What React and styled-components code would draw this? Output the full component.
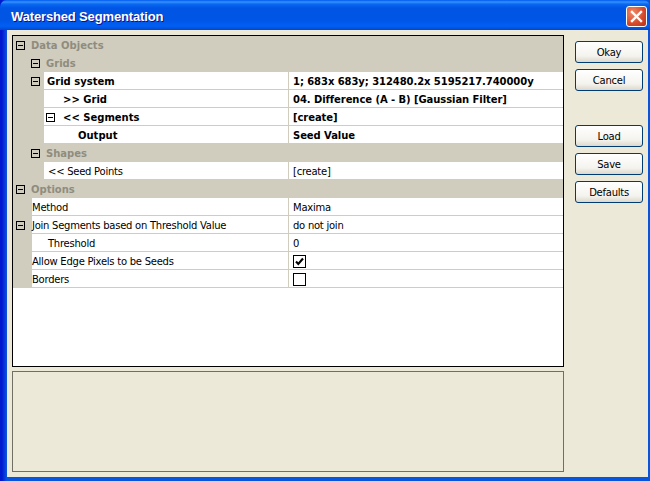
import React from "react";
import styled, { createGlobalStyle } from "styled-components";

const Global = createGlobalStyle`
  html, body { margin: 0; padding: 0; background: #0831d9; }
  #root { width: 650px; height: 481px; overflow: hidden; }
`;

const Win = styled.div`
  width: 650px;
  height: 481px;
  display: flex;
  flex-direction: column;
  overflow: hidden;
  font-family: "DejaVu Sans", Tahoma, sans-serif;
  font-size: 10px;
  color: #000;
  background: linear-gradient(90deg, #0019cf 0, #0019cf 2px, #0831d9 4px, #0855dd 7px, #0855dd 100%);
`;

const TitleBar = styled.div`
  height: 30px;
  flex: none;
  box-sizing: border-box;
  display: flex;
  align-items: center;
  justify-content: space-between;
  padding: 3px 3px 0 11px;
  border-radius: 7px 7px 0 0;
  background: linear-gradient(180deg, #0058ee 0, #3593ff 2px, #0a6af0 4px, #0055e5 8px, #0055e5 20px, #0060f4 26px, #0047cc 30px);
`;

const Title = styled.div`
  font-family: "Liberation Sans", Arial, sans-serif;
  font-weight: 700;
  font-size: 13px;
  color: #fff;
  text-shadow: 1px 1px 0 #0f1089;
  letter-spacing: -0.15px;
`;

const CloseBtn = styled.div`
  width: 21px;
  height: 21px;
  box-sizing: border-box;
  border: 1px solid #fff;
  border-radius: 3px;
  background: radial-gradient(circle at 30% 30%, #ee8a66, #d5482a 60%, #b93212);
  display: flex;
  align-items: center;
  justify-content: center;
`;

const Body = styled.div`
  flex: 1;
  display: flex;
  margin: 0 2px 4px 7px;
  background: #ece9d8;
  padding: 5px 5px 5px 5px;
  gap: 11px;
  min-height: 0;
`;

const Main = styled.div`
  flex: 1;
  min-width: 0;
  display: flex;
  flex-direction: column;
  gap: 4px;
`;

const Sheet = styled.div`
  height: 332px;
  box-sizing: border-box;
  background: #fff;
  border: 1px solid #000;
  overflow: hidden;
`;

const Info = styled.div`
  flex: 1;
  box-sizing: border-box;
  border: 1px solid #716f64;
  background: #ece9d8;
`;

const Row = styled.div`
  display: flex;
  height: 18px;
  box-sizing: border-box;
  background: #d0cdbe;
`;

const Gutter = styled.div`
  flex: none;
  width: ${(p) => p.$w}px;
  box-sizing: border-box;
  display: flex;
  align-items: center;
  justify-content: flex-end;
  padding-right: ${(p) => p.$pr}px;
`;

const Category = styled.div`
  flex: 1;
  display: flex;
  align-items: center;
  font-weight: 700;
  color: #8f8c7e;
  padding-left: ${(p) => p.$pad}px;
`;

const Cells = styled.div`
  flex: 1;
  min-width: 0;
  display: flex;
  background: #fff;
  border-bottom: 1px solid #d0cdbe;
`;

const NameCell = styled.div`
  flex: none;
  width: ${(p) => p.$w}px;
  box-sizing: border-box;
  display: flex;
  align-items: center;
  border-right: 1px solid #d0cdbe;
  font-weight: ${(p) => (p.$bold ? 700 : 400)};
  letter-spacing: ${(p) => (p.$bold ? "0" : "-0.25px")};
  padding: 1px 0 0 ${(p) => p.$pad}px;
  white-space: nowrap;
`;

const ValueCell = styled.div`
  flex: 1;
  display: flex;
  align-items: center;
  padding: 1px 0 0 4px;
  font-weight: ${(p) => (p.$bold ? 700 : 400)};
  letter-spacing: ${(p) => (p.$bold ? "-0.07px" : "-0.25px")};
  white-space: nowrap;
`;

const InlineToggle = styled.span`
  display: inline-flex;
  margin-right: 8px;
`;

const Check = styled.div`
  width: 13px;
  height: 13px;
  box-sizing: border-box;
  border: 1px solid #000;
  background: #fff;
  display: flex;
  align-items: center;
  justify-content: center;
`;

const Side = styled.div`
  flex: none;
  width: 68px;
  display: flex;
  flex-direction: column;
  padding-top: 6px;
`;

const Btn = styled.button`
  width: 68px;
  height: 22px;
  padding: 0;
  margin-top: ${(p) => p.$mt}px;
  box-sizing: border-box;
  font-family: "DejaVu Sans", Tahoma, sans-serif;
  font-size: 10px;
  letter-spacing: -0.25px;
  color: #000;
  border: 1px solid #003c74;
  border-radius: 3px;
  background: linear-gradient(180deg, #fff 0, #f4f3ee 70%, #dcd8ca 100%);
`;

const Toggle = () => (
  <svg width="9" height="9" viewBox="0 0 9 9" shapeRendering="crispEdges">
    <rect x="0.5" y="0.5" width="8" height="8" fill="none" stroke="#000" />
    <rect x="2" y="4" width="5" height="1" fill="#000" />
  </svg>
);

const Tick = () => (
  <svg width="9" height="9" viewBox="0 0 9 9">
    <path d="M1 4.5 L3.3 7 L8 1.5" fill="none" stroke="#000" strokeWidth="2.1" />
  </svg>
);

const CatRow = ({ gutter, children }) => (
  <Row>
    <Gutter $w={gutter} $pr={0}>
      <Toggle />
    </Gutter>
    <Category $pad={6}>{children}</Category>
  </Row>
);

const PropRow = ({ gutter, toggle, inline, pad, bold, name, value, valueBold }) => (
  <Row>
    <Gutter $w={gutter} $pr={gutter === 31 ? 4 : 7}>
      {toggle && <Toggle />}
    </Gutter>
    <Cells>
      <NameCell $w={257 - (gutter - 19)} $pad={pad} $bold={bold}>
        {inline && (
          <InlineToggle>
            <Toggle />
          </InlineToggle>
        )}
        {name}
      </NameCell>
      <ValueCell $bold={valueBold}>{value}</ValueCell>
    </Cells>
  </Row>
);

export default function App() {
  return (
    <Win>
      <Global />
      <TitleBar>
        <Title>Watershed Segmentation</Title>
        <CloseBtn>
          <svg width="13" height="13" viewBox="0 0 13 13">
            <path d="M2 2 L11 11 M11 2 L2 11" stroke="#fff" strokeWidth="2.4" strokeLinecap="square" />
          </svg>
        </CloseBtn>
      </TitleBar>
      <Body>
        <Main>
          <Sheet>
            <CatRow gutter={12}>Data Objects</CatRow>
            <CatRow gutter={27}>Grids</CatRow>
            <PropRow gutter={31} toggle pad={3} bold name="Grid system" value="1; 683x 683y; 312480.2x 5195217.740000y" valueBold />
            <PropRow gutter={31} pad={19} bold name=">> Grid" value="04. Difference (A - B) [Gaussian Filter]" valueBold />
            <PropRow gutter={31} inline pad={2} bold name="<< Segments" value="[create]" valueBold />
            <PropRow gutter={31} pad={34} bold name="Output" value="Seed Value" valueBold />
            <CatRow gutter={27}>Shapes</CatRow>
            <PropRow gutter={31} pad={4} name="<< Seed Points" value="[create]" />
            <CatRow gutter={12}>Options</CatRow>
            <PropRow gutter={19} pad={0} name="Method" value="Maxima" />
            <PropRow gutter={19} toggle pad={0} name="Join Segments based on Threshold Value" value="do not join" />
            <PropRow gutter={19} pad={16} name="Threshold" value="0" />
            <PropRow gutter={19} pad={0} name="Allow Edge Pixels to be Seeds" value={<Check><Tick /></Check>} />
            <PropRow gutter={19} pad={0} name="Borders" value={<Check />} />
          </Sheet>
          <Info />
        </Main>
        <Side>
          <Btn $mt={0}>Okay</Btn>
          <Btn $mt={6}>Cancel</Btn>
          <Btn $mt={34}>Load</Btn>
          <Btn $mt={6}>Save</Btn>
          <Btn $mt={6}>Defaults</Btn>
        </Side>
      </Body>
    </Win>
  );
}
